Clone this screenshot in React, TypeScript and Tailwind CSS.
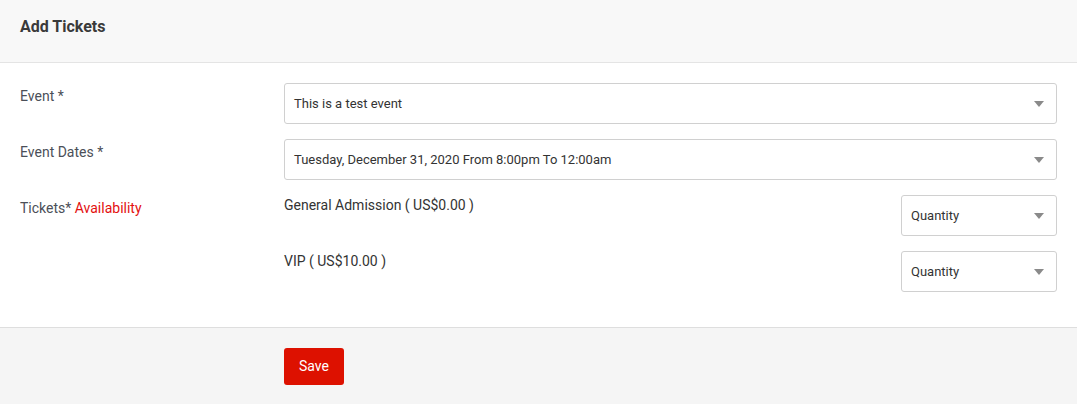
import React from "react";

function Arrow() {
  return (
    <svg width="10" height="6" viewBox="0 0 10 6" className="shrink-0">
      <path d="M0 0 L10 0 L5 6 Z" fill="#8a8a8a" />
    </svg>
  );
}

function Select({ value, className = "" }: { value: string; className?: string }) {
  return (
    <div
      className={`flex items-center justify-between h-[41px] border border-[#d0d0d0] rounded-[3px] bg-white pl-[9px] pr-[12px] text-[13px] text-[#333333] ${className}`}
    >
      <span>{value}</span>
      <Arrow />
    </div>
  );
}

export default function App() {
  return (
    <div className="w-[1077px] h-[404px] bg-white text-[14px]" style={{ fontFamily: "Roboto, 'Liberation Sans', sans-serif" }}>
      <div className="h-[63px] bg-[#f8f8f8] border-b border-[#e4e4e4] px-[20px] pt-[17px]">
        <div className="text-[16px] leading-[20px] font-bold text-[#3a3a3a]">Add Tickets</div>
      </div>
      <div className="px-[20px] pt-[20px] pb-[20px] flex flex-col">
        <div className="flex mb-[15px]">
          <div className="w-[264px] pt-[3px] leading-[20px] text-[#4b4f58]">Event *</div>
          <Select value="This is a test event" className="flex-1" />
        </div>
        <div className="flex mb-[15px]">
          <div className="w-[264px] pt-[3px] leading-[20px] text-[#4b4f58]">Event Dates *</div>
          <Select value="Tuesday, December 31, 2020 From 8:00pm To 12:00am" className="flex-1" />
        </div>
        <div className="flex">
          <div className="w-[264px] pt-[3px] leading-[20px] text-[#4b4f58]">
            Tickets* <span className="text-[#e3100f]">Availability</span>
          </div>
          <div className="flex-1 flex flex-col">
            <div className="flex justify-between mb-[15px]">
              <div className="leading-[20px] text-[#333333]">General Admission ( US$0.00 )</div>
              <Select value="Quantity" className="w-[156px]" />
            </div>
            <div className="flex justify-between mb-[15px]">
              <div className="leading-[20px] text-[#333333]">VIP ( US$10.00 )</div>
              <Select value="Quantity" className="w-[156px]" />
            </div>
          </div>
        </div>
      </div>
      <div className="border-t border-[#dedede] bg-[#f5f5f5] h-[77px] pl-[284px] pt-[20px]">
        <button className="h-[37px] w-[60px] rounded-[3px] bg-[#dd1100] text-white text-[14px]">Save</button>
      </div>
    </div>
  );
}
